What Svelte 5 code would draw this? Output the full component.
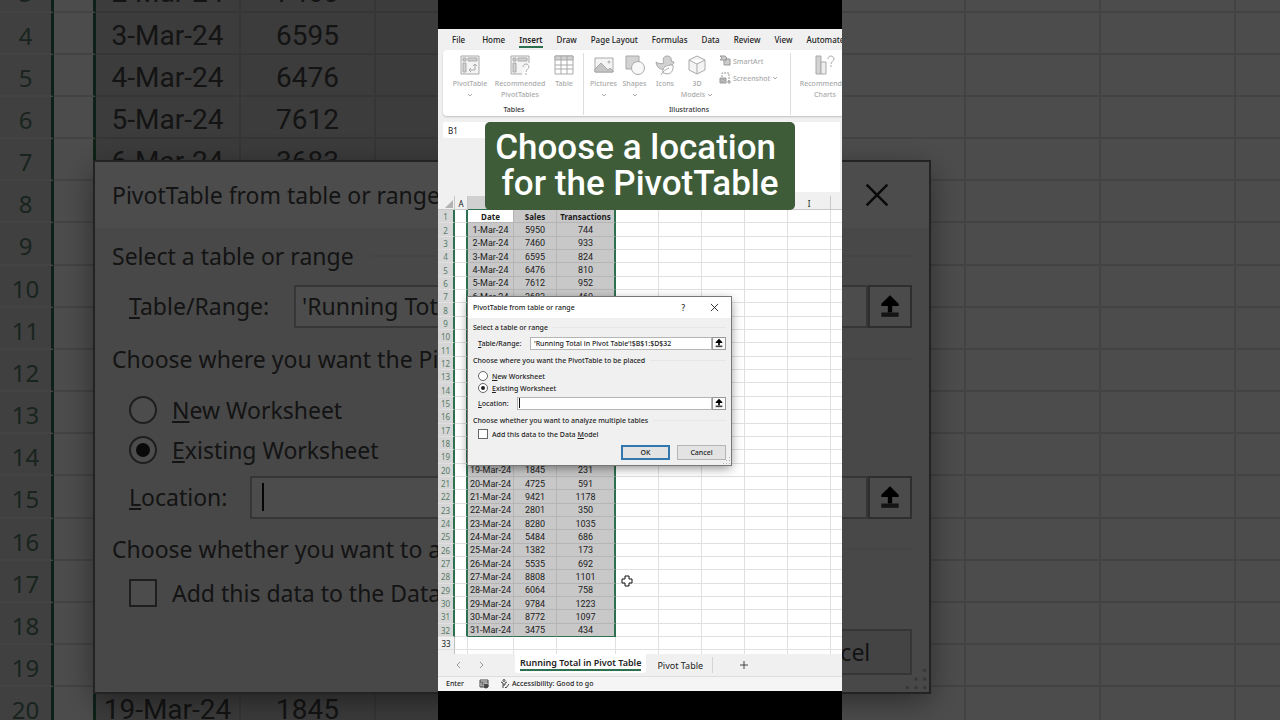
<script>
  // Tutorial clip: spreadsheet in a portrait frame, with an enlarged dimmed copy behind it

  const tabs = ['File', 'Home', 'Insert', 'Draw', 'Page Layout', 'Formulas', 'Data', 'Review', 'View', 'Automate'];
  const columns = ['A', 'B', 'C', 'D', 'E', 'F', 'G', 'H', 'I', ''];

  const values = {
    1: [5950, 744],
    2: [7460, 933],
    3: [6595, 824],
    4: [6476, 810],
    5: [7612, 952],
    6: [3683, 460],
    19: [1845, 231],
    20: [4725, 591],
    21: [9421, 1178],
    22: [2801, 350],
    23: [8280, 1035],
    24: [5484, 686],
    25: [1382, 173],
    26: [5535, 692],
    27: [8808, 1101],
    28: [6064, 758],
    29: [9784, 1223],
    30: [8772, 1097],
    31: [3475, 434]
  };

  const rows = Array.from({ length: 34 }, (_, i) => {
    const n = i + 1;
    if (n === 1) return { n, cells: ['Date', 'Sales', 'Transactions'] };
    const day = values[n - 1];
    return { n, cells: day ? [`${n - 1}-Mar-24`, ...day] : ['', '', ''] };
  });

  let range = $state("'Running Total in Pivot Table'!$B$1:$D$32");
  let location = $state('');
  let target = $state('existing');
  let addToModel = $state(false);
</script>

{#snippet sheet()}
  <table class="sheet">
    <colgroup>
      <col class="col-n" /><col class="col-a" /><col class="col-b" /><col class="col-c" /><col class="col-d" />
      <col class="col" /><col class="col" /><col class="col" /><col class="col" /><col class="col" /><col class="col" />
    </colgroup>
    <thead>
      <tr>
        <th class="corner"><svg viewBox="0 0 10 10"><path d="M9 1v8H1z" fill="#b3b3b3" /></svg></th>
        {#each columns as name, i}
          <th class:picked={i > 0 && i < 4}>{name}</th>
        {/each}
      </tr>
    </thead>
    <tbody>
      {#each rows as row}
        <tr class:title={row.n === 1} class:selected={row.n < 33} class:last={row.n === 32}>
          <th>{row.n < 34 ? row.n : ''}</th>
          <td></td>
          {#each row.cells as cell, i}
            <td class="cell" class:end={i === 2}>{cell}</td>
          {/each}
          <td></td><td></td><td></td><td></td><td></td><td></td>
        </tr>
      {/each}
    </tbody>
  </table>
{/snippet}

{#snippet collapse(label)}
  <button class="collapse" aria-label={label}>
    <svg viewBox="0 0 12 12"><path d="M6 1l4 4v1H7v3H5V6H2V5z" /><path d="M2 9h8v2H2z" fill="#444" /></svg>
  </button>
{/snippet}

{#snippet dialog(id)}
  <div class="dialog" role="dialog" aria-labelledby="{id}-title">
    <header>
      <span id="{id}-title">PivotTable from table or range</span>
      <button class="help" aria-label="Help">?</button>
      <button class="close" aria-label="Close">
        <svg viewBox="0 0 10 10" fill="none" stroke="#222"><path d="M1 1l8 8M9 1l-8 8" /></svg>
      </button>
    </header>
    <div class="form">
      <h2>Select a table or range</h2>
      <div class="field">
        <label class="wide" for="{id}-range"><span><u>T</u>able/Range:</span></label>
        <input id="{id}-range" type="text" bind:value={range} />
        {@render collapse('Collapse range')}
      </div>
      <h2>Choose where you want the PivotTable to be placed</h2>
      <label class="option"><input type="radio" name="{id}-target" value="new" bind:group={target} /><span><u>N</u>ew Worksheet</span></label>
      <label class="option"><input type="radio" name="{id}-target" value="existing" bind:group={target} /><span><u>E</u>xisting Worksheet</span></label>
      <div class="field location">
        <label for="{id}-location"><span><u>L</u>ocation:</span></label>
        <input id="{id}-location" type="text" bind:value={location} />
        <i class="caret"></i>
        {@render collapse('Collapse location')}
      </div>
      <h2>Choose whether you want to analyze multiple tables</h2>
      <label class="option"><input type="checkbox" bind:checked={addToModel} /><span>Add this data to the Data <u>M</u>odel</span></label>
      <div class="actions">
        <button class="ok">OK</button>
        <button>Cancel</button>
      </div>
    </div>
    <svg class="grip" viewBox="0 0 9 9" fill="#b5b5b5"><path d="M7 1h1v1H7zM7 4h1v1H7zM4 4h1v1H4zM7 7h1v1H7zM4 7h1v1H4zM1 7h1v1H1z" /></svg>
  </div>
{/snippet}

{#snippet chevron()}
  <svg class="chevron" viewBox="0 0 6 6" fill="none" stroke="#aaa"><path d="M1 2l2 2 2-2" /></svg>
{/snippet}

<div class="stage">
  <div class="backdrop" aria-hidden="true" inert>
    {@render sheet()}
    {@render dialog('back')}
  </div>

  <main class="frame">
    <div class="app">
      <nav class="tabs">
        {#each tabs as tab}
          <button class:active={tab === 'Insert'}>{tab}</button>
        {/each}
      </nav>

      <section class="ribbon">
        <div class="group tables">
          <div class="tools">
            <button>
              <svg viewBox="0 0 20 20" fill="none" stroke="#a9a9a9">
                <path d="M1 1h18v18H1z" fill="#f4f4f4" /><path d="M3 3h3v3H3zM8 3h9v3H8zM3 8h3v9H3z" fill="#d2d2d2" />
                <path d="M9 15h6V9M13 11l2-2 2 2M11 13l-2 2 2 2" />
              </svg>
              <span>PivotTable</span>{@render chevron()}
            </button>
            <button>
              <svg viewBox="0 0 20 20" fill="none" stroke="#a9a9a9">
                <path d="M12 19H1V1h18v7" fill="#f4f4f4" /><path d="M3 3h3v3H3zM8 3h9v3H8zM3 8h3v9H3z" fill="#d2d2d2" />
                <path d="M13 12c0-4 6-4 6 0 0 2-3 2-3 5M16 18v2" />
              </svg>
              <span>Recommended</span><span>PivotTables</span>
            </button>
            <button>
              <svg viewBox="0 0 20 20" fill="none" stroke="#a9a9a9">
                <path d="M1 1h18v18H1z" /><path d="M1 1h18v4H1z" fill="#d2d2d2" /><path d="M1 10h18M1 14h18M7 1v18M13 1v18" />
              </svg>
              <span>Table</span>
            </button>
          </div>
          <h3>Tables</h3>
        </div>

        <div class="group illustrations">
          <div class="tools">
            <button>
              <svg viewBox="0 0 20 20" fill="none" stroke="#a9a9a9">
                <path d="M1 3h18v14H1z" fill="#f4f4f4" /><path d="M1 14l6-6 7 7 2-2 3 3v1H1z" fill="#c4c4c4" /><circle cx="15" cy="7" r="1" />
              </svg>
              <span>Pictures</span>{@render chevron()}
            </button>
            <button>
              <svg viewBox="0 0 20 20" stroke="#a9a9a9">
                <path d="M1 1h13v13H1z" fill="#d2d2d2" /><circle cx="13" cy="13" r="6.5" fill="#f8f8f8" />
              </svg>
              <span>Shapes</span>{@render chevron()}
            </button>
            <button>
              <svg viewBox="0 0 20 20" stroke="#a9a9a9" fill="#d2d2d2">
                <path d="M9 8C7 4 9 1 12 1s5 2 4 5l3 1c0 2-2 3-4 3-1 6-13 7-14-3 3 2 5 2 8 1z" />
                <path d="M8 18c-1-6 3-8 10-8 1 6-3 11-9 8zM6 20c2-4 4-5 8-7" fill="#fff" />
              </svg>
              <span>Icons</span>
            </button>
            <button>
              <svg viewBox="0 0 20 20" fill="#f4f4f4" stroke="#a9a9a9">
                <path d="M10 1l8 4v10l-8 4-8-4V5zM2 5l8 4 8-4M10 9v10" />
              </svg>
              <span>3D</span><span class="with-arrow">Models {@render chevron()}</span>
            </button>
            <div class="stack">
              <button>
                <svg viewBox="0 0 12 12" fill="#ccc" stroke="#999"><path d="M1 1h5l2 2-2 2H1l2-2z" /><path d="M4 6h3V4h4v6H5V7" /></svg>
                SmartArt
              </button>
              <button>
                <svg viewBox="0 0 12 12" fill="none" stroke="#999"><path d="M3 5V1h7v9" stroke-dasharray="2 1" /><path d="M1 6h6v5H1z" fill="#bbb" /><circle cx="4" cy="8.5" r="1" fill="#fff" /><path d="M10 8v4M8 10h4" /></svg>
                Screenshot {@render chevron()}
              </button>
            </div>
          </div>
          <h3>Illustrations</h3>
        </div>

        <div class="group charts">
          <div class="tools">
            <button>
              <svg viewBox="0 0 20 20" fill="#d2d2d2" stroke="#a9a9a9">
                <path d="M1 1h5v18H1z" /><path d="M6 7h5v12H6z" fill="#eee" /><path d="M13 4c0-4 6-4 6 0 0 2-3 2-3 5M16 10v2" fill="none" />
              </svg>
              <span>Recommended</span><span>Charts</span>
            </button>
          </div>
        </div>
      </section>

      <div class="formula-bar">
        <input class="name-box" type="text" value="B1" aria-label="Name box" />
        <textarea aria-label="Formula bar"></textarea>
      </div>

      <div class="grid">
        {@render sheet()}
      </div>

      <footer class="sheet-tabs">
        <button class="arrow" aria-label="Previous sheet"><svg viewBox="0 0 8 8" fill="none" stroke="#999"><path d="M5 1L2 4l3 3" /></svg></button>
        <button class="arrow" aria-label="Next sheet"><svg viewBox="0 0 8 8" fill="none" stroke="#999"><path d="M3 1l3 3-3 3" /></svg></button>
        <button class="sheet-tab current"><span>Running Total in Pivot Table</span></button>
        <button class="sheet-tab">Pivot Table</button>
        <button class="add" aria-label="New sheet"><svg viewBox="0 0 8 8" stroke="#444"><path d="M4 0v8M0 4h8" /></svg></button>
      </footer>

      <div class="status">
        <span class="mode">Enter</span>
        <svg viewBox="0 0 10 10" fill="none" stroke="#444"><path d="M1 1h8v7H1zM1 3h8M3 3v5M3 5h3" /><circle cx="7" cy="7" r="2" fill="#444" /></svg>
        <span class="access">
          <svg viewBox="0 0 10 10" fill="none" stroke="#444"><circle cx="4" cy="1.5" r="1" /><path d="M1 3l2 1v5M7 3L5 4v2M3 6h2M5 8l1 1 3-4" /></svg>
          Accessibility: Good to go
        </span>
      </div>

      {@render dialog('front')}

      <svg class="pointer" viewBox="0 0 12 12" fill="#fff" stroke="#111"><path d="M4 1h4v3h3v4H8v3H4V8H1V4h3z" /></svg>
      <p class="caption">{'Choose a location \nfor the PivotTable'}</p>
    </div>
  </main>
</div>

<style>
  :global(body) {
    background: #000;
  }

  .stage {
    position: relative;
    display: flex;
    justify-content: center;
    height: 100vh;
    overflow: hidden;
    font-family: "Noto Sans", "Open Sans", sans-serif;
    color: #222;
  }

  .stage :is(button, input, textarea) {
    box-sizing: border-box;
    margin: 0;
    padding: 0;
    border: 0;
    border-radius: 0;
    background: none;
    color: inherit;
    font: inherit;
    outline: none;
  }

  svg {
    display: block;
    flex: none;
  }

  /* Sizes shared by the sheet and the dialog, once per scale */
  .frame {
    --cell-text: 9px;
    --number-text: 8px;
    --line: 1px;
    --edge: 2px;
    --head-row: 14px;
    --row: 13px;
    --drop: 2px;
    --sheet-height: 468px;
    --col-n: 17px;
    --col-a: 13px;
    --col-b: 46px;
    --col-c: 43px;
    --col-d: 59px;
    --col: 43px;

    --dialog-width: 263px;
    --title-row: 21px;
    --form-rows: 18px 14px 20px 12px 12px 18px 16px 12px 25px;
    --ui-text: 7px;
    --pad: 5px;
    --mark: 10px;
    --mark-gap: 4px;
    --field: 13px;
    --label-wide: 52px;
    --label: 39px;
    --collapse: 14px;
    --button-width: 49px;
    --button-height: 15px;
    --button-gap: 7px;
    --icon: 9px;
    --arrow: 10px;
  }

  .backdrop {
    --cell-text: 28px;
    --number-text: 24px;
    --line: 2px;
    --edge: 3px;
    --head-row: 44px;
    --row: 42px;
    --drop: 6px;
    --sheet-height: 1478px;
    --col-n: 54px;
    --col-a: 42px;
    --col-b: 145px;
    --col-c: 135px;
    --col-d: 185px;
    --col: 135px;

    --dialog-width: 834px;
    --title-row: 66px;
    --form-rows: 56px 44px 62px 40px 40px 54px 50px 38px 80px;
    --ui-text: 23px;
    --pad: 17px;
    --mark: 28px;
    --mark-gap: 15px;
    --field: 43px;
    --label-wide: 165px;
    --label: 121px;
    --collapse: 44px;
    --button-width: 155px;
    --button-height: 46px;
    --button-gap: 22px;
    --icon: 26px;
    --arrow: 26px;

    position: absolute;
    inset: 0;
    overflow: hidden;
    background: #fff;
  }

  .backdrop::after {
    content: '';
    position: absolute;
    inset: 0;
    background: rgba(0, 0, 0, 0.7);
  }

  .backdrop .sheet {
    position: absolute;
    top: -158px;
    left: 0;
    color: #444;
  }

  .backdrop .dialog {
    top: 162px;
    left: 95px;
    box-shadow: 0 8px 30px rgba(0, 0, 0, 0.45);
    color: #444;
    font-weight: 400;
  }

  .frame {
    position: relative;
    flex: none;
    box-sizing: border-box;
    min-width: 0;
    height: 100%;
    aspect-ratio: 101 / 180;
    padding: 29px 0;
    overflow: hidden;
    background: #000;
  }

  .app {
    position: relative;
    display: flex;
    flex-direction: column;
    height: 100%;
    overflow: hidden;
    background: #f0f0f0;
  }

  /* Ribbon */
  .tabs {
    display: flex;
    flex: none;
    gap: 14px;
    height: 21px;
    padding-left: 14px;
    font-size: 8px;
    font-weight: 500;
    line-height: 22px;
    white-space: nowrap;
  }

  .tabs button {
    flex: none;
    height: 19px;
  }

  .tabs button:first-child {
    margin-right: 3px;
  }

  .tabs .active {
    border-bottom: 2px solid #2d7050;
    font-weight: 600;
  }

  .ribbon {
    display: flex;
    flex: none;
    height: 66px;
    margin-left: 5px;
    overflow: hidden;
    border-radius: 4px 0 0 4px;
    background: #fff;
    box-shadow: 0 1px 2px rgba(0, 0, 0, 0.2);
  }

  .group {
    display: flex;
    flex: none;
    flex-direction: column;
    justify-content: space-between;
    box-sizing: border-box;
    margin: 3px 0 1px;
    padding: 2px 0 0 2px;
    border-right: 1px solid #ddd;
    color: #aaa;
    font-size: 7px;
    font-weight: 500;
    line-height: 11px;
  }

  .tools {
    display: grid;
  }

  .tables .tools {
    grid-template-columns: 50px 50px 38px;
  }

  .illustrations {
    padding-left: 4px;
  }

  .illustrations .tools {
    grid-template-columns: 31px 31px 30px 34px 76px;
  }

  .charts .tools {
    grid-template-columns: 64px;
  }

  .tools button {
    display: flex;
    flex-direction: column;
    align-items: center;
    justify-content: flex-start;
    white-space: nowrap;
  }

  .tools button > svg:first-child {
    width: 20px;
    height: 20px;
    margin-bottom: 3px;
  }

  .tools .chevron {
    width: 6px;
    height: 6px;
    margin-top: 3px;
  }

  .with-arrow {
    display: flex;
    gap: 2px;
  }

  .tools .stack {
    display: flex;
    flex-direction: column;
    gap: 5px;
    padding-left: 5px;
  }

  .tools .stack button {
    flex-direction: row;
    align-items: center;
    gap: 2px;
  }

  .tools .stack button > svg:first-child {
    width: 12px;
    height: 12px;
    margin: 0;
  }

  .tools .stack .chevron {
    margin: 0;
  }

  .group h3 {
    margin: 0;
    color: #333;
    font-size: 7px;
    font-weight: 500;
    text-align: center;
  }

  .formula-bar {
    display: flex;
    flex: none;
    gap: 8px;
    height: 80px;
    padding: 6px 2px 4px 5px;
    box-sizing: border-box;
    font-size: 8px;
  }

  .name-box {
    width: 80px;
    height: 16px;
    padding-left: 5px !important;
    border-radius: 2px !important;
    background: #fff !important;
  }

  .formula-bar textarea {
    flex: 1;
    resize: none;
    background: #fff;
  }

  .grid {
    flex: 1;
    min-height: 0;
    overflow: hidden;
    background: #fff;
  }

  /* Sheet */
  .sheet {
    width: 100%;
    height: var(--sheet-height);
    border-spacing: 0;
    table-layout: fixed;
    background: #fff;
    font-family: Roboto, sans-serif;
    font-size: var(--cell-text);
    line-height: 1;
    color: #1c1c1c;
  }

  .col-n { width: var(--col-n); }
  .col-a { width: var(--col-a); }
  .col-b { width: var(--col-b); }
  .col-c { width: var(--col-c); }
  .col-d { width: var(--col-d); }
  .col { width: var(--col); }

  .sheet th,
  .sheet td {
    box-sizing: border-box;
    height: var(--row);
    padding: var(--drop) 0 0;
    border: 0 solid #e0e0e0;
    border-width: 0 var(--line) var(--line) 0;
    overflow: hidden;
    text-align: center;
    white-space: nowrap;
  }

  .sheet th {
    background: #f0f0f0;
    font-family: "Noto Sans", sans-serif;
    font-size: var(--number-text);
    font-weight: 400;
  }

  .sheet thead th {
    height: var(--head-row);
    border-color: #c8c8c8;
  }

  .sheet thead .picked {
    border-bottom-color: #2d7050;
    background: #d0d0d0;
  }

  .corner svg {
    width: 10px;
    margin-left: auto;
  }

  .sheet tbody th {
    border-right: var(--line) solid #c0c0c0;
  }

  .sheet .selected th {
    border-right: var(--edge) solid #2d7050;
    background: #d6d6d6;
    color: #557a66;
  }

  .sheet .selected th + td {
    border-right: var(--edge) solid #2d7050;
  }

  .sheet .selected .cell {
    border-color: #b5b5b5;
    background: #c8c8c8;
  }

  .sheet .selected .end {
    border-right: var(--edge) solid #2d7050;
  }

  .sheet .last .cell {
    border-bottom: var(--line) solid #2d7050;
  }

  .sheet .title .cell {
    font-family: "Noto Sans", sans-serif;
    font-size: 8px;
    font-weight: 700;
  }

  .sheet .title th + td + .cell {
    background: #fff;
  }

  /* Dialog */
  .dialog {
    position: absolute;
    top: 268px;
    left: 30px;
    width: var(--dialog-width);
    box-sizing: border-box;
    outline: var(--line) solid #777;
    background: #f0f0f0;
    box-shadow: 0 3px 10px rgba(0, 0, 0, 0.45);
    font-size: var(--ui-text);
    font-weight: 500;
    line-height: 1;
    white-space: nowrap;
  }

  .dialog header {
    display: flex;
    align-items: center;
    height: var(--title-row);
    padding: 0 calc(var(--pad) + var(--button-gap)) 0 var(--pad);
    background: #fff;
  }

  .dialog header span {
    flex: 1;
  }

  .dialog .help {
    margin-right: calc(var(--pad) * 5);
    font-size: var(--number-text);
  }

  .close svg {
    width: var(--icon);
  }

  .form {
    display: grid;
    grid-template-rows: var(--form-rows);
    padding: 0 var(--pad);
  }

  .form h2 {
    display: flex;
    align-items: center;
    gap: var(--pad);
    margin: 0;
    font-size: var(--ui-text);
    font-weight: inherit;
  }

  .form h2::after {
    content: '';
    flex: 1;
    height: var(--line);
    background: #e6e6e6;
  }

  .field {
    position: relative;
    display: flex;
    align-items: center;
    padding-left: var(--pad);
  }

  .field label {
    flex: none;
    width: var(--label);
  }

  .field .wide {
    width: var(--label-wide);
  }

  .field input {
    flex: 1;
    min-width: 0;
    height: var(--field);
    padding: 0 calc(var(--line) * 3) !important;
    border: var(--line) solid #b5b5b5 !important;
    background: #fff !important;
  }

  .caret {
    position: absolute;
    left: calc(var(--pad) + var(--label) + var(--mark-gap) - var(--edge));
    width: var(--line);
    height: var(--mark);
    background: #111;
  }

  .collapse {
    display: grid;
    place-items: center;
    width: var(--collapse);
    height: var(--field);
    border: var(--line) solid #999 !important;
    background: #fafafa !important;
  }

  .collapse svg {
    width: var(--arrow);
  }

  .option {
    display: flex;
    align-items: center;
    gap: var(--mark-gap);
    padding-left: var(--pad);
  }

  .option input {
    display: grid;
    place-items: center;
    width: var(--mark);
    height: var(--mark);
    border: var(--line) solid #666 !important;
    background: #fff !important;
    appearance: none;
  }

  .option input[type='radio'] {
    border-radius: 50% !important;
  }

  .option input[type='radio']:checked::before {
    content: '';
    width: 60%;
    height: 60%;
    border-radius: 50%;
    background: #222;
  }

  .actions {
    display: flex;
    justify-content: flex-end;
    align-items: center;
    gap: var(--button-gap);
  }

  .actions button {
    width: var(--button-width);
    height: var(--button-height);
    border: var(--line) solid #b5b5b5 !important;
    background: #e3e3e3 !important;
  }

  .actions .ok {
    border: var(--edge) solid #3278ae !important;
  }

  .grip {
    position: absolute;
    right: 0;
    bottom: 0;
    width: var(--icon);
  }

  /* Bottom bars */
  .sheet-tabs {
    display: flex;
    flex: none;
    align-items: center;
    height: 22px;
    padding-left: 10px;
    border-bottom: 1px solid #ddd;
    font-size: 9px;
  }

  .arrow {
    display: grid;
    place-items: center;
    width: 22px;
  }

  .sheet-tabs svg {
    width: 8px;
  }

  .sheet-tab {
    height: 16px;
    padding: 0 9px !important;
    border-right: 1px solid #d5d5d5 !important;
    white-space: nowrap;
  }

  .current {
    height: 19px;
    margin: 0 2px 3px 23px !important;
    padding: 0 5px !important;
    border: 0 !important;
    border-radius: 0 0 3px 3px !important;
    background: #fff !important;
    font-weight: 600 !important;
  }

  .current span {
    display: block;
    border-bottom: 2px solid #2d7050;
    line-height: 13px;
  }

  .add {
    margin-left: 27px !important;
  }

  .status {
    display: flex;
    flex: none;
    align-items: center;
    height: 14px;
    padding-left: 8px;
    background: #f5f5f5;
    font-size: 7px;
    font-weight: 500;
    line-height: 14px;
  }

  .status svg {
    width: 10px;
  }

  .mode {
    width: 33px;
  }

  .access {
    display: flex;
    align-items: center;
    gap: 2px;
    margin-left: 11px;
  }

  .pointer {
    position: absolute;
    top: 546px;
    left: 183px;
    width: 12px;
  }

  .caption {
    position: absolute;
    top: 93px;
    left: 50%;
    box-sizing: border-box;
    width: 310px;
    height: 88px;
    margin: 0;
    padding: 8px 0;
    transform: translateX(-50%);
    border-radius: 5px;
    background: #3d5c37;
    color: #fff;
    font-family: Roboto, sans-serif;
    font-size: 35px;
    font-weight: 500;
    line-height: 36px;
    text-align: center;
    white-space: pre;
  }
</style>
